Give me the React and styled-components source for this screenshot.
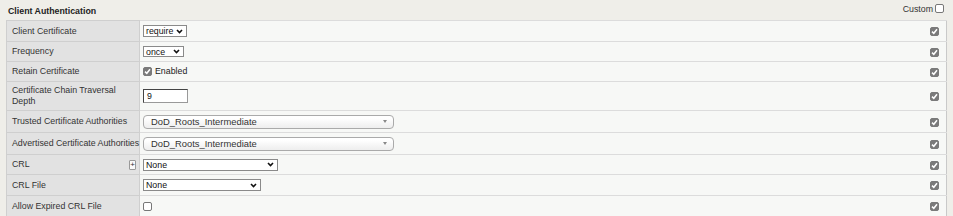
import React from "react";
import styled, { createGlobalStyle } from "styled-components";

const Global = createGlobalStyle`
  html, body { margin: 0; padding: 0; background: #efeee9; }
  body { font-family: "Liberation Sans", Arial, sans-serif; font-size: 8.8px; color: #333; }
`;

const Page = styled.div`
  width: 953px;
  height: 216px;
  overflow: hidden;
  background: #efeee9;
  padding: 0 6px;
  box-sizing: border-box;
`;

const Header = styled.div`
  height: 20px;
  display: flex;
  align-items: center;
  justify-content: space-between;
  padding: 2px 3px 0 2px;
  box-sizing: border-box;
`;

const Title = styled.div`
  font-weight: bold;
  font-size: 8.8px;
  color: #222;
`;

const CustomLabel = styled.label`
  display: flex;
  align-items: center;
  gap: 2px;
  color: #333;
  margin-top: -5px;
`;

const Table = styled.table`
  width: 941px;
  border-collapse: collapse;
  table-layout: fixed;
  border: 1px solid #c9c9c9;
`;

const Row = styled.tr`
  height: ${(p) => p.$h}px;
`;

const LabelCell = styled.td`
  width: 126px;
  background: #e2e2e2;
  border: 1px solid #cfcfcf;
  padding: 0 1px 0 5px;
  vertical-align: middle;
  color: #333;
  line-height: 11px;
  white-space: ${(p) => (p.$wrap ? "normal" : "nowrap")};
  position: relative;
`;

const ValueCell = styled.td`
  background: #f7f8f6;
  border-top: 1px solid #dcdcdc;
  border-bottom: 1px solid #dcdcdc;
  padding: 0 3px;
  vertical-align: middle;
`;

const CheckCell = styled.td`
  width: 13px;
  background: #f7f8f6;
  border-top: 1px solid #dcdcdc;
  border-bottom: 1px solid #dcdcdc;
  padding: 0 3px 0 0;
  vertical-align: middle;
`;

const Box = styled.span`
  display: inline-flex;
  align-items: center;
  justify-content: center;
  width: 9px;
  height: 9px;
  box-sizing: border-box;
  border-radius: 2px;
  background: ${(p) => (p.$checked ? "#7a7a7a" : "#fff")};
  border: 1px solid ${(p) => (p.$checked ? "#7a7a7a" : "#777")};
  vertical-align: middle;
`;

const Check = ({ checked }) => (
  <Box $checked={checked}>
    {checked && (
      <svg width="7" height="7" viewBox="0 0 7 7">
        <path d="M1 3.6 L2.8 5.3 L6 1.3" fill="none" stroke="#fff" strokeWidth="1.5" />
      </svg>
    )}
  </Box>
);

const Select = styled.span`
  display: inline-flex;
  align-items: center;
  justify-content: space-between;
  width: ${(p) => p.$w}px;
  height: ${(p) => p.$hh || 12}px;
  box-sizing: border-box;
  border: 1px solid #8a8a8a;
  background: #fff;
  padding: 0 3px 0 2px;
  color: #111;
  vertical-align: middle;
`;

const Chevron = () => (
  <svg width="7" height="5" viewBox="0 0 7 5">
    <path d="M1 1 L3.5 3.5 L6 1" fill="none" stroke="#111" strokeWidth="1.6" />
  </svg>
);

const Chosen = styled.span`
  display: inline-flex;
  align-items: center;
  justify-content: space-between;
  width: 251px;
  height: 14px;
  box-sizing: border-box;
  border: 1px solid #aaa;
  border-radius: 4px;
  background: linear-gradient(#fff 20%, #f6f6f6 60%, #eee);
  padding: 0 6px 0 7px;
  color: #333;
  font-size: 9.4px;
  vertical-align: middle;
`;

const Tri = styled.span`
  width: 0;
  height: 0;
  border-left: 2.5px solid transparent;
  border-right: 2.5px solid transparent;
  border-top: 3px solid #888;
`;

const Input = styled.span`
  display: inline-flex;
  align-items: center;
  width: 45px;
  height: 14px;
  box-sizing: border-box;
  border: 1px solid #444;
  border-right-color: #999;
  border-bottom-color: #999;
  background: #fff;
  padding-left: 3px;
  color: #111;
`;

const Inline = styled.span`
  display: inline-flex;
  align-items: center;
  gap: 3px;
  color: #222;
`;

const PlusBtn = styled.span`
  position: absolute;
  right: 3px;
  top: 5px;
  width: 7px;
  height: 10px;
  box-sizing: border-box;
  border: 1px solid #999;
  border-radius: 1px;
  background: #fafafa;
  font-size: 8px;
  line-height: 8px;
  text-align: center;
  color: #333;
`;

const rows = [
  { label: "Client Certificate", h: 21, value: <Select $w={44} $hh={12}>require <Chevron /></Select> },
  { label: "Frequency", h: 20, value: <Select $w={41} $hh={11}>once <Chevron /></Select> },
  { label: "Retain Certificate", h: 20, value: <Inline><Check checked />Enabled</Inline> },
  { label: "Certificate Chain Traversal Depth", h: 29, wrap: true, value: <Input>9</Input> },
  { label: "Trusted Certificate Authorities", h: 22, value: <Chosen>DoD_Roots_Intermediate<Tri /></Chosen> },
  { label: "Advertised Certificate Authorities", h: 22, value: <Chosen>DoD_Roots_Intermediate<Tri /></Chosen> },
  { label: "CRL", h: 20, plus: true, value: <Select $w={135} $hh={12}>None <Chevron /></Select> },
  { label: "CRL File", h: 21, value: <Select $w={118} $hh={12}>None <Chevron /></Select> },
  { label: "Allow Expired CRL File", h: 21, value: <Check /> },
];

export default function App() {
  return (
    <Page>
      <Global />
      <Header>
        <Title>Client Authentication</Title>
        <CustomLabel>Custom <Check /></CustomLabel>
      </Header>
      <Table>
        <tbody>
          {rows.map((r) => (
            <Row key={r.label} $h={r.h}>
              <LabelCell $wrap={r.wrap}>
                {r.label}
                {r.plus && <PlusBtn>+</PlusBtn>}
              </LabelCell>
              <ValueCell>{r.value}</ValueCell>
              <CheckCell><Check checked /></CheckCell>
            </Row>
          ))}
        </tbody>
      </Table>
    </Page>
  );
}
